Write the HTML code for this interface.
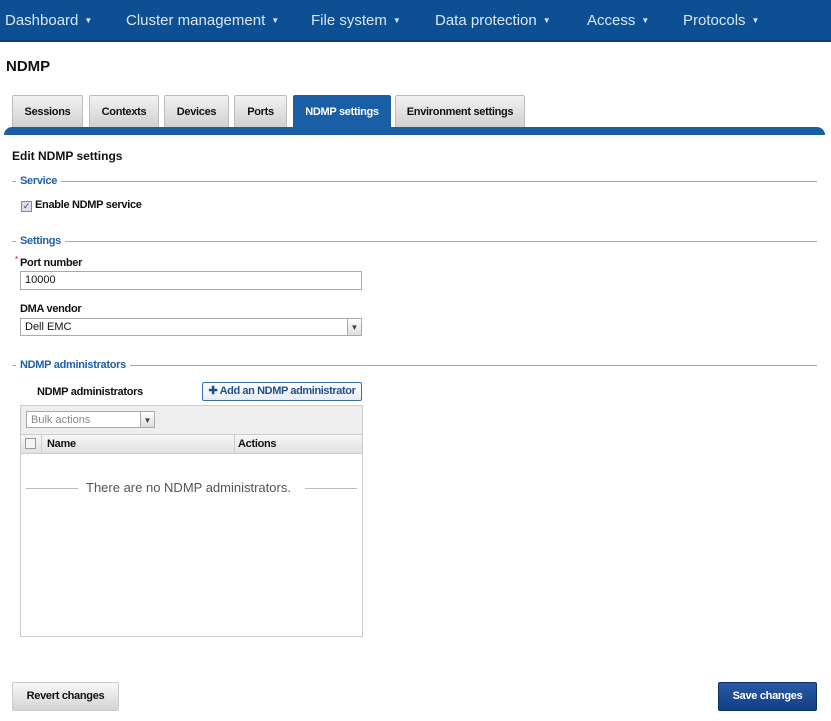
<!DOCTYPE html>
<html><head><style>
*{margin:0;padding:0;box-sizing:border-box}
body{width:831px;height:721px;background:#fff;font-family:"Liberation Sans",Arial,sans-serif;position:relative;overflow:hidden;color:#111}
.a{position:absolute}
.nav{left:0;top:0;width:831px;height:42px;background:#0d4f93;border-bottom:2px solid #0a3f78}
.nav span{position:absolute;top:12px;color:#d8e6f5;font-size:15px;white-space:nowrap}
.nav i{font-style:normal;font-size:8px;margin-left:6px;vertical-align:2px}
.tab{top:95px;height:33px;background:linear-gradient(#f2f2f2,#cfcfcf);border:1px solid #bbb;border-bottom:none;font-size:11px;font-weight:bold;text-align:center;line-height:33px;border-radius:2px 2px 0 0;letter-spacing:-0.3px}
.tab.on{background:#1a5fa6;color:#fff;border-color:#1a5fa6}
.bar{left:4px;top:127px;width:821px;height:8px;background:#1a5fa6;border-radius:8px 8px 0 0}
.leg{font-size:11px;font-weight:bold;color:#1f5fa5;background:#fff;padding:0 4px;letter-spacing:-0.3px}
.line{height:1px;background:#9ab}
.lbl{font-size:11px;font-weight:bold;letter-spacing:-0.3px}
.inp{border:1px solid #aaa;background:#fff;font-size:11px;padding-left:4px;line-height:17px}
.sel{position:absolute;right:0;top:0;width:14px;height:100%;border-left:1px solid #aaa;background:linear-gradient(#fff,#ddd);font-size:8px;text-align:center;color:#444}
</style></head><body>
<div class="a nav">
<span style="left:5px">Dashboard<i>▼</i></span>
<span style="left:126px">Cluster management<i>▼</i></span>
<span style="left:311px">File system<i>▼</i></span>
<span style="left:435px">Data protection<i>▼</i></span>
<span style="left:587px">Access<i>▼</i></span>
<span style="left:683px">Protocols<i>▼</i></span>
</div>
<div class="a" style="left:6px;top:58px;font-size:15px;font-weight:bold">NDMP</div>
<div class="a tab" style="left:12px;width:71px">Sessions</div>
<div class="a tab" style="left:89px;width:70px">Contexts</div>
<div class="a tab" style="left:164px;width:65px">Devices</div>
<div class="a tab" style="left:234px;width:53px">Ports</div>
<div class="a tab on" style="left:293px;width:98px">NDMP settings</div>
<div class="a tab" style="left:395px;width:130px">Environment settings</div>
<div class="a bar"></div>
<div class="a" style="left:12px;top:149px;font-size:12px;font-weight:bold">Edit NDMP settings</div>

<div class="a line" style="left:12px;top:181px;width:805px"></div>
<div class="a leg" style="left:16px;top:175px">Service</div>
<div class="a" style="left:21px;top:201px;width:11px;height:11px;border:1px solid #888;background:#dde;font-size:9px;line-height:9px;text-align:center;color:#446">✓</div>
<div class="a lbl" style="left:35px;top:199px">Enable NDMP service</div>

<div class="a line" style="left:12px;top:241px;width:805px"></div>
<div class="a leg" style="left:16px;top:235px">Settings</div>
<div class="a" style="left:15px;top:255px;font-size:8px;color:#c00">*</div>
<div class="a lbl" style="left:20px;top:257px">Port number</div>
<div class="a inp" style="left:20px;top:271px;width:342px;height:19px">10000</div>
<div class="a lbl" style="left:20px;top:303px">DMA vendor</div>
<div class="a inp" style="left:20px;top:318px;width:342px;height:18px">Dell EMC<div class="sel">▼</div></div>

<div class="a line" style="left:12px;top:365px;width:805px"></div>
<div class="a leg" style="left:16px;top:359px">NDMP administrators</div>
<div class="a lbl" style="left:37px;top:386px">NDMP administrators</div>
<div class="a" style="left:202px;top:382px;width:160px;height:19px;border:1px solid #3a70b0;border-radius:2px;background:linear-gradient(#fff,#e8eef6);font-size:11px;font-weight:bold;color:#1f4f8f;text-align:center;line-height:17px;letter-spacing:-0.4px;white-space:nowrap">✚ Add an NDMP administrator</div>
<div class="a" style="left:20px;top:405px;width:343px;height:232px;border:1px solid #ccc"></div>
<div class="a" style="left:21px;top:406px;width:341px;height:28px;background:#eee"></div>
<div class="a inp" style="left:26px;top:411px;width:129px;height:17px;color:#888">Bulk actions<div class="sel">▼</div></div>
<div class="a" style="left:21px;top:434px;width:341px;height:20px;background:linear-gradient(#f6f6f6,#e2e2e2);border-top:1px solid #ccc;border-bottom:1px solid #ccc"></div>
<div class="a" style="left:25px;top:438px;width:11px;height:11px;border:1px solid #999;background:#f4f4f4"></div>
<div class="a" style="left:41px;top:435px;width:1px;height:18px;background:#ccc"></div>
<div class="a" style="left:234px;top:435px;width:1px;height:18px;background:#ccc"></div>
<div class="a lbl" style="left:47px;top:438px">Name</div>
<div class="a lbl" style="left:238px;top:438px">Actions</div>
<div class="a" style="left:26px;top:488px;width:52px;height:1px;background:#bbb"></div>
<div class="a" style="left:305px;top:488px;width:52px;height:1px;background:#bbb"></div>
<div class="a" style="left:86px;top:480px;font-size:13px;color:#555;white-space:nowrap">There are no NDMP administrators.</div>

<div class="a" style="left:12px;top:682px;width:107px;height:29px;border:1px solid #ccc;border-radius:2px;background:linear-gradient(#f8f8f8,#d4d4d4);font-size:11px;font-weight:bold;text-align:center;line-height:27px;letter-spacing:-0.3px">Revert changes</div>
<div class="a" style="left:718px;top:682px;width:99px;height:29px;border:1px solid #0c2f6a;border-radius:2px;background:linear-gradient(#2a5aa5,#123e85);color:#fff;font-size:11px;font-weight:bold;text-align:center;line-height:27px;letter-spacing:-0.3px">Save changes</div>
</body></html>
